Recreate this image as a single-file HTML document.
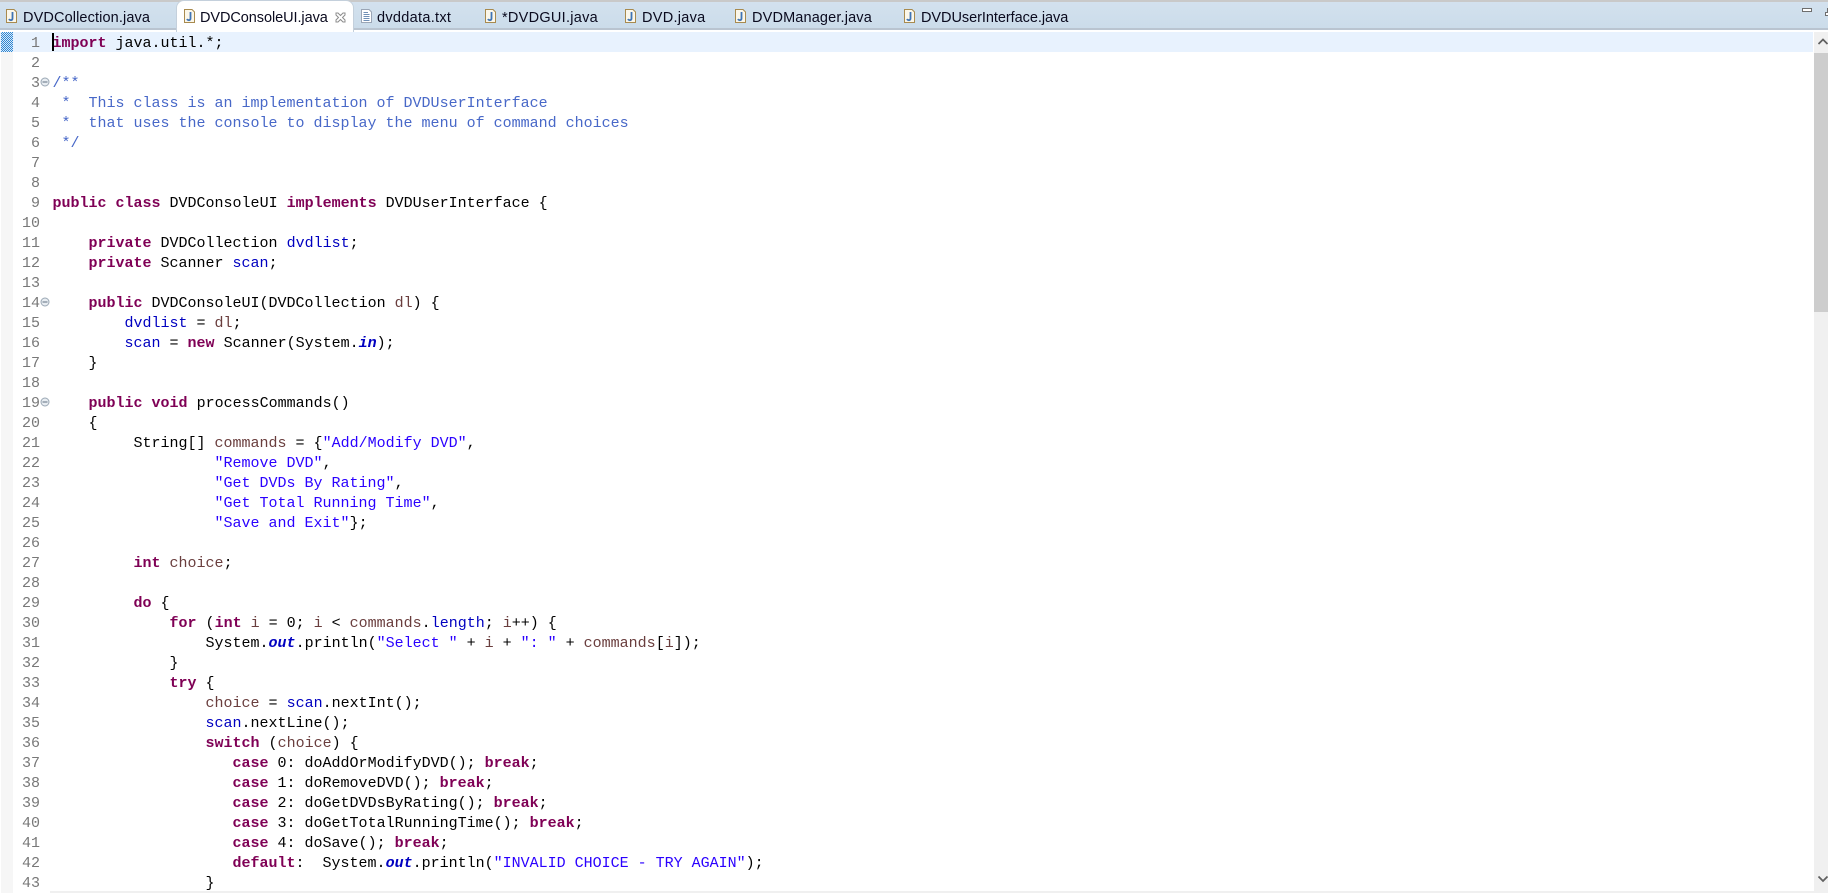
<!DOCTYPE html>
<html><head><meta charset="utf-8"><style>
html,body{margin:0;padding:0;width:1828px;height:893px;overflow:hidden;background:#fff}
body{position:relative}
.a{position:absolute}
#bar{left:0;top:0;width:1828px;height:30px;background:linear-gradient(#d3e1ee,#cbdcea);border-top:2px solid #c9c9c9;box-sizing:border-box;border-bottom:2px solid #b9c4d0}
#active{left:177px;top:1px;width:176px;height:31px;background:#fff;border-radius:7px 7px 0 0;box-shadow:0 0 0 1px #c4d0dc}
.t{position:absolute;top:7px;font:14.500px/22px "Liberation Sans",sans-serif;color:#0a0a1e;white-space:nowrap}
.i{position:absolute;top:9px}
#left{left:1px;top:32px;width:12px;height:861px;background:#f6f6f6}
#mark{left:1px;top:32px;width:12px;height:20px;background:repeating-conic-gradient(#2f86d2 0 25%,#d8e9f8 0 50%) 0 0/2px 2px}
#cur{left:0;top:32px;width:1813px;height:20px;background:#e8f2fe}
#bottom{left:50px;top:891px;width:1778px;height:2px;background:#f0f0f0;z-index:3}
#track{left:1814px;top:32px;width:14px;height:861px;background:#f0f0f0}
#thumb{left:1814px;top:53px;width:14px;height:259px;background:#cdcdcd}
#caret{left:52px;top:33px;width:2px;height:18px;background:#000}
#nums,#code{font:15px/20px "Liberation Mono",monospace;margin:0;position:absolute;top:34px;white-space:pre}
#nums{left:13px;width:27px;text-align:right;color:#787878}
#code{left:52.500px;color:#000;letter-spacing:0}
b{color:#7f0055}
.c{color:#4868c8}
.s{color:#2a00ff}
.f{color:#0000c0}
.l{color:#6a3e3e}
.o{color:#0000c0;font-style:italic;font-weight:bold}
</style></head><body>
<div class="a" id="bar"></div>
<div class="a" id="active"></div>
<div class="a" id="cur"></div>
<svg width="0" height="0" style="position:absolute"><defs>
<symbol id="j" viewBox="0 0 11 14"><path d="M.5.5H8L10.500 3V13.500H.5Z" fill="#fbf7ea" stroke="#a88a4e"/><path d="M6.500 3V9.500C6.500 11.500 4 11.800 3 10" fill="none" stroke="#3f74b5" stroke-width="1.800"/></symbol>
<symbol id="d" viewBox="0 0 11 14"><path d="M.5.5H8L10.500 3V13.500H.5Z" fill="#fff" stroke="#9aa5b5"/><path d="M2.500 3.500H7M2.500 5.500H8.500M2.500 7.500H8.500M2.500 9.500H8.500M2.500 11.500H8.500" stroke="#6f8fb5"/></symbol>
</defs></svg>
<svg class="i" style="left:6px" width="11" height="14"><use href="#j"/></svg><span class="t" style="left:23px;letter-spacing:.12px">DVDCollection.java</span>
<svg class="i" style="left:184px" width="11" height="14"><use href="#j"/></svg><span class="t" style="left:200px;letter-spacing:-.07px">DVDConsoleUI.java</span>
<svg class="i" style="left:335px;top:12px" width="11" height="11" viewBox="0 0 11 11"><path d="M1 1H3L5.500 3.500 8 1H10V3L7.500 5.500 10 8V10H8L5.500 7.500 3 10H1V8L3.500 5.500 1 3Z" fill="#fff" stroke="#8c8c8c"/></svg>
<svg class="i" style="left:361px" width="11" height="14"><use href="#d"/></svg><span class="t" style="left:377px;letter-spacing:.3px">dvddata.txt</span>
<svg class="i" style="left:485px" width="11" height="14"><use href="#j"/></svg><span class="t" style="left:502px;letter-spacing:.28px">*DVDGUI.java</span>
<svg class="i" style="left:625px" width="11" height="14"><use href="#j"/></svg><span class="t" style="left:642px;letter-spacing:.28px">DVD.java</span>
<svg class="i" style="left:735px" width="11" height="14"><use href="#j"/></svg><span class="t" style="left:752px;letter-spacing:.15px">DVDManager.java</span>
<svg class="i" style="left:904px" width="11" height="14"><use href="#j"/></svg><span class="t" style="left:921px;letter-spacing:-.05px">DVDUserInterface.java</span>
<div class="a" style="left:1802px;top:8px;width:8px;height:2px;border:1px solid #6e6e6e;background:#fff"></div>
<div class="a" style="left:1827px;top:8px;width:1px;height:4px;border:1px solid #6e6e6e;border-right:0;background:#fff"></div>
<div class="a" style="left:1825px;top:12px;width:3px;height:2px;border:1px solid #6e6e6e;border-right:0;background:#fff"></div>
<div class="a" id="left"></div>
<div class="a" id="mark"></div>
<div class="a" id="bottom"></div>
<div class="a" id="track"></div>
<div class="a" id="thumb"></div>
<svg class="a" style="left:1818px;top:38px" width="10" height="8"><path d="M.5 6L5 1.500 9.500 6" fill="none" stroke="#606060" stroke-width="1.700"/></svg>
<svg class="a" style="left:1818px;top:875px" width="10" height="8"><path d="M.5 1.500L5 6 9.500 1.500" fill="none" stroke="#606060" stroke-width="1.700"/></svg>
<svg class="a" style="left:40px;top:77px" width="10" height="10"><circle cx="5" cy="5" r="4" fill="#e8edf2" stroke="#9aa7b4"/><path d="M2.500 5H7.500" stroke="#5f6f80"/></svg>
<svg class="a" style="left:40px;top:297px" width="10" height="10"><circle cx="5" cy="5" r="4" fill="#e8edf2" stroke="#9aa7b4"/><path d="M2.500 5H7.500" stroke="#5f6f80"/></svg>
<svg class="a" style="left:40px;top:397px" width="10" height="10"><circle cx="5" cy="5" r="4" fill="#e8edf2" stroke="#9aa7b4"/><path d="M2.500 5H7.500" stroke="#5f6f80"/></svg>
<pre id="nums">1
2
3
4
5
6
7
8
9
10
11
12
13
14
15
16
17
18
19
20
21
22
23
24
25
26
27
28
29
30
31
32
33
34
35
36
37
38
39
40
41
42
43</pre>
<pre id="code"><b>import</b> java.util.*;

<span class="c">/**</span>
<span class="c"> *  This class is an implementation of DVDUserInterface</span>
<span class="c"> *  that uses the console to display the menu of command choices</span>
<span class="c"> */</span>


<b>public</b> <b>class</b> DVDConsoleUI <b>implements</b> DVDUserInterface {

    <b>private</b> DVDCollection <span class="f">dvdlist</span>;
    <b>private</b> Scanner <span class="f">scan</span>;

    <b>public</b> DVDConsoleUI(DVDCollection <span class="l">dl</span>) {
        <span class="f">dvdlist</span> = <span class="l">dl</span>;
        <span class="f">scan</span> = <b>new</b> Scanner(System.<span class="o">in</span>);
    }

    <b>public</b> <b>void</b> processCommands()
    {
         String[] <span class="l">commands</span> = {<span class="s">"Add/Modify DVD"</span>,
                  <span class="s">"Remove DVD"</span>,
                  <span class="s">"Get DVDs By Rating"</span>,
                  <span class="s">"Get Total Running Time"</span>,
                  <span class="s">"Save and Exit"</span>};

         <b>int</b> <span class="l">choice</span>;

         <b>do</b> {
             <b>for</b> (<b>int</b> <span class="l">i</span> = 0; <span class="l">i</span> &lt; <span class="l">commands</span>.<span class="f">length</span>; <span class="l">i</span>++) {
                 System.<span class="o">out</span>.println(<span class="s">"Select "</span> + <span class="l">i</span> + <span class="s">": "</span> + <span class="l">commands</span>[<span class="l">i</span>]);
             }
             <b>try</b> {
                 <span class="l">choice</span> = <span class="f">scan</span>.nextInt();
                 <span class="f">scan</span>.nextLine();
                 <b>switch</b> (<span class="l">choice</span>) {
                    <b>case</b> 0: doAddOrModifyDVD(); <b>break</b>;
                    <b>case</b> 1: doRemoveDVD(); <b>break</b>;
                    <b>case</b> 2: doGetDVDsByRating(); <b>break</b>;
                    <b>case</b> 3: doGetTotalRunningTime(); <b>break</b>;
                    <b>case</b> 4: doSave(); <b>break</b>;
                    <b>default</b>:  System.<span class="o">out</span>.println(<span class="s">"INVALID CHOICE - TRY AGAIN"</span>);
                 }</pre>
<div class="a" id="caret"></div>
</body></html>
